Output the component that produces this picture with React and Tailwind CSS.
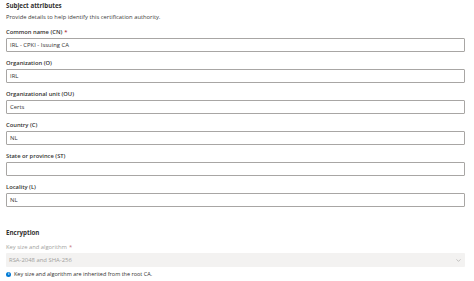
import { ChevronDown } from 'lucide-react';

const fields = [
  { label: 'Common name (CN)', required: true, value: 'IRL - CPKI - Issuing CA' },
  { label: 'Organization (O)', value: 'IRL' },
  { label: 'Organizational unit (OU)', value: 'Certs' },
  { label: 'Country (C)', value: 'NL' },
  { label: 'State or province (ST)', value: '' },
  { label: 'Locality (L)', value: 'NL' },
];

const Field = ({ label, required, value }) => (
  <div className="flex flex-col gap-[1px]">
    <div className="h-[10px] flex items-center text-[5.8px] font-semibold text-[#323130]">
      {label}
      {required && <span className="ml-[2px] text-[#a4262c]">*</span>}
    </div>
    <div className="h-[14px] flex items-center px-[3px] border border-[#a8a6a4] rounded-[1px] bg-white text-[5.9px] text-[#323130]">
      {value}
    </div>
  </div>
);

export default function App() {
  return (
    <div
      className="w-[474px] h-[281px] bg-white pl-[6px] pr-[9px] pt-[2px] overflow-hidden"
      style={{ fontFamily: '"Open Sans", "Noto Sans", sans-serif' }}
    >
      <div className="h-[8px] flex items-center text-[6.2px] font-bold text-[#323130]">Subject attributes</div>
      <div className="mt-[3px] h-[8px] flex items-center text-[5.8px] text-[#3b3a39]">
        Provide details to help identify this certification authority.
      </div>

      <div className="mt-[6px] flex flex-col gap-[6px]">
        {fields.map((f) => (
          <Field key={f.label} {...f} />
        ))}
      </div>

      <div className="mt-[22px] h-[8px] flex items-center text-[6.2px] font-bold text-[#323130]">Encryption</div>

      <div className="mt-[5px] flex flex-col gap-[1px]">
        <div className="h-[10px] flex items-center text-[5.8px] text-[#a19f9d]">
          Key size and algorithm
          <span className="ml-[2px] text-[#c5767b]">*</span>
        </div>
        <div className="h-[14px] flex items-center justify-between px-[3px] bg-[#f3f2f1] rounded-[1px] text-[5.9px] text-[#a19f9d]">
          <span>RSA-2048 and SHA-256</span>
          <ChevronDown className="w-[7px] h-[7px] text-[#a19f9d]" strokeWidth={2} />
        </div>
      </div>

      <div className="mt-[3px] h-[8px] flex items-center gap-[3px] text-[5.5px] text-[#323130]">
        <span className="w-[5px] h-[5px] rounded-full bg-[#0078d4] flex items-center justify-center text-white text-[4px] font-bold leading-none">i</span>
        Key size and algorithm are inherited from the root CA.
      </div>
    </div>
  );
}
